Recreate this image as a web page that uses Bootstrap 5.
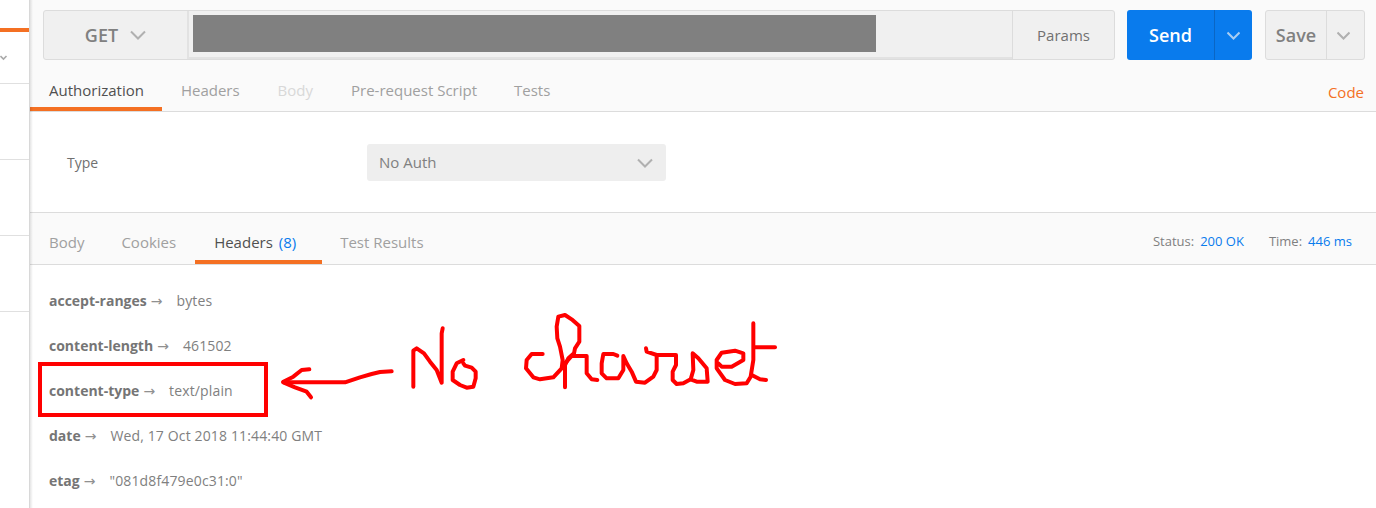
<!DOCTYPE html>
<html lang="en">
<head>
<meta charset="utf-8">
<title>Postman</title>
<link href="https://cdn.jsdelivr.net/npm/bootstrap@5.3.0/dist/css/bootstrap.min.css" rel="stylesheet">
<style>
html,body{height:508px;overflow:hidden}
body{font-family:"Open Sans",sans-serif;font-size:14px;color:#808080;background:#fff;position:relative}
.shell{height:508px}
.sidebar{width:29px;flex:none;background:#fff}
.side-top{height:84px;position:relative;border-bottom:1px solid #e0e0e0}
.side-top::before{content:"";position:absolute;left:0;right:0;top:28px;height:4px;background:#f47023}
.side-chev{position:absolute;left:0;top:55px}
.side-row{height:76px;border-bottom:1px solid #e0e0e0}
.main-pane{flex:1 1 auto;min-width:0;border-left:1px solid #d8d8d8;position:relative}
.main-pane::after{content:"";position:absolute;left:0;top:0;bottom:0;width:3px;background:linear-gradient(to right,rgba(0,0,0,.1),rgba(0,0,0,0))}
.req-head{height:112px;background:#fafafa;border-bottom:1px solid #dcdcdc}
.req-bar{padding:10px 11px 0 13px;height:60px}
.url-group{width:1072px;height:50px;border:1px solid #dcdcdc;border-radius:3px;background:#f0f0f0;overflow:hidden}
.method{width:145px;flex:none;border-right:2px solid #e2e2e2;font-size:18px;font-weight:600;color:#808080;gap:12px}
.url-box{flex:1 1 auto;padding:4px 4px;border-bottom:2px solid #e2e2e2}
.url-mask{width:683px;height:37px;background:#808080}
.params{width:102px;flex:none;border-left:1px solid #dcdcdc;color:#707070;font-size:15px}
.send-group{width:125px;height:50px;margin-left:12px;background:#097bed;border-radius:3px;color:#fff;overflow:hidden}
.send-main{width:87px;font-size:18px;font-weight:600}
.send-caret{flex:1 1 auto;border-left:1px solid #0a66c4}
.save-group{width:100px;height:50px;margin-left:13px;background:#f0f0f0;border:1px solid #dcdcdc;border-radius:3px;overflow:hidden}
.save-main{width:60px;font-size:18px;font-weight:600;color:#808080}
.save-caret{flex:1 1 auto;border-left:1px solid #dcdcdc;padding-right:4px}
.tab-row{height:51px}
.req-tabs{height:51px}
.tab-item{display:flex;align-items:center;color:#a0a0a0;font-size:15px;padding:13px 0 0;margin-right:38px;border-bottom:4px solid transparent;height:51px;white-space:nowrap}
.tab-item.on{color:#505050;border-bottom-color:#f47023}
.tab-item.dim{color:#d8d8d8}
.tab-item.tight{margin-right:37px}
.req-tabs .tab-item.on{padding-left:19px;padding-right:18px;margin-right:19px}
.code-link{color:#f47023;font-size:15px;padding:13px 12px 0 0}
.auth-pane{height:101px;background:#fff;border-bottom:1px solid #dcdcdc;padding:32px 0 0 37px}
.auth-label{width:300px;height:37px;color:#707070}
.auth-select{width:299px;height:37px;background:#eeeeee;border-radius:3px;padding:0 13px 0 12px;color:#808080;font-size:15px}
.res-head{height:52px;background:#fafafa;border-bottom:1px solid #dcdcdc;padding-left:19px}
.res-tabs .tab-item{padding-top:12px}
.res-tabs .tab-item.on{margin-left:-19px;padding-left:19px;padding-right:26px;margin-right:18px}
.count{color:#097bed;margin-left:2px}
.res-meta{font-size:13px;color:#808080;padding:6px 24px 0 0;gap:25px}
.res-meta b{font-weight:400;color:#097bed;margin-left:6px}
.hdr-list{padding:26px 0 0 19px;margin:0;list-style:none}
.hdr-item{height:45px;line-height:20px;white-space:nowrap}
.hdr-item strong{font-weight:700;color:#757575}
.hdr-arrow{font-family:"DejaVu Sans",sans-serif;color:#909090;line-height:1;margin:0 14px 0 4px}
.hdr-val{letter-spacing:.14px}
.mark-box{position:absolute;left:38px;top:362px;width:230px;height:55px;border:4px solid #f00}
.scribble{position:absolute;left:270px;top:300px;width:520px;height:110px;fill:none;stroke:#f00;stroke-width:12;stroke-linecap:round;stroke-linejoin:round}
</style>
</head>
<body>
<div class="d-flex shell">
  <div class="sidebar">
    <div class="side-top">
      <svg class="side-chev" width="8" height="6" viewBox="0 0 8 6"><path d="M.5 1l3 3 3-3" fill="none" stroke="#aaa" stroke-width="1.600"/></svg>
    </div>
    <div class="side-row"></div>
    <div class="side-row"></div>
    <div class="side-row"></div>
  </div>
  <div class="main-pane">
    <div class="req-head">
      <div class="d-flex req-bar">
        <div class="d-flex url-group">
          <div class="d-flex align-items-center justify-content-center method">GET
            <svg width="16" height="10" viewBox="0 0 16 10"><path d="M1 1.500l7 7 7-7" fill="none" stroke="#b0b0b0" stroke-width="2"/></svg>
          </div>
          <div class="url-box"><div class="url-mask"></div></div>
          <div class="d-flex align-items-center justify-content-center params">Params</div>
        </div>
        <div class="d-flex send-group">
          <div class="d-flex align-items-center justify-content-center send-main">Send</div>
          <div class="d-flex align-items-center justify-content-center send-caret">
            <svg width="13" height="9" viewBox="0 0 13 9"><path d="M.5 1.500l6 6 6-6" fill="none" stroke="#a9cdf2" stroke-width="2"/></svg>
          </div>
        </div>
        <div class="d-flex save-group">
          <div class="d-flex align-items-center justify-content-center save-main">Save</div>
          <div class="d-flex align-items-center justify-content-center save-caret">
            <svg width="13" height="9" viewBox="0 0 13 9"><path d="M.5 1.500l6 6 6-6" fill="none" stroke="#b0b0b0" stroke-width="2"/></svg>
          </div>
        </div>
      </div>
      <div class="d-flex justify-content-between tab-row">
        <div class="d-flex req-tabs">
          <div class="tab-item on">Authorization</div>
          <div class="tab-item">Headers</div>
          <div class="tab-item dim">Body</div>
          <div class="tab-item tight">Pre-request Script</div>
          <div class="tab-item">Tests</div>
        </div>
        <div class="code-link d-flex align-items-center">Code</div>
      </div>
    </div>
    <div class="auth-pane d-flex align-items-start">
      <div class="auth-label d-flex align-items-center">Type</div>
      <div class="auth-select d-flex align-items-center justify-content-between">No Auth
        <svg width="16" height="10" viewBox="0 0 16 10"><path d="M1 1.500l7 7 7-7" fill="none" stroke="#b0b0b0" stroke-width="2"/></svg>
      </div>
    </div>
    <div class="res-head d-flex justify-content-between">
      <div class="d-flex res-tabs">
        <div class="tab-item tight">Body</div>
        <div class="tab-item">Cookies</div>
        <div class="tab-item on">Headers&nbsp;<span class="count">(8)</span></div>
        <div class="tab-item">Test Results</div>
      </div>
      <div class="d-flex align-items-center res-meta">
        <span>Status:<b>200 OK</b></span>
        <span>Time:<b>446 ms</b></span>
      </div>
    </div>
    <ul class="hdr-list">
      <li class="hdr-item"><strong>accept-ranges</strong><span class="hdr-arrow">→</span><span class="hdr-val">bytes</span></li>
      <li class="hdr-item"><strong>content-length</strong><span class="hdr-arrow">→</span><span class="hdr-val">461502</span></li>
      <li class="hdr-item"><strong>content-type</strong><span class="hdr-arrow">→</span><span class="hdr-val">text/plain</span></li>
      <li class="hdr-item"><strong>date</strong><span class="hdr-arrow">→</span><span class="hdr-val">Wed, 17 Oct 2018 11:44:40 GMT</span></li>
      <li class="hdr-item"><strong>etag</strong><span class="hdr-arrow">→</span><span class="hdr-val">"081d8f479e0c31:0"</span></li>
    </ul>
  </div>
</div>
<div class="mark-box"></div>
<svg class="scribble" viewBox="0 0 1560 330">
  <path d="M365 214L330 216 305 222 270 232 225 247 40 247"/>
  <path d="M118 208L95 210 70 230 40 245"/>
  <path d="M40 247L75 262 110 275 123 292"/>
  <path d="M430 260L430 152 440 145 462 160 480 185 500 210 515 248 515 100 518 85"/>
  <path d="M580 180L560 190 548 215 548 240 570 255 590 263 610 260 617 235 617 215 605 203 585 197 580 190"/>
  <path d="M818 162L785 162 770 180 768 205 790 232 810 238 850 232 875 205 878 180 870 140 862 115 860 80 865 50 885 45 905 58 928 78 928 125 915 145 912 160 895 175 885 195 885 262"/>
  <path d="M885 190L905 168 950 168 950 220 965 238 982 240"/>
  <path d="M1042 167L1030 162 1000 162 995 190 995 220 1010 235 1045 235 1060 210 1060 168 1070 190 1085 215 1098 245 1125 248 1150 230 1160 210 1160 170"/>
  <path d="M1128 145L1130 155 1160 165 1218 165 1218 195 1208 215 1208 240 1220 252 1240 250 1262 238 1270 210 1268 160 1285 175 1310 205 1313 245 1280 245 1262 238"/>
  <path d="M1345 190L1355 200 1385 200 1420 180 1420 160 1395 152 1355 158 1340 180 1340 205 1365 240 1395 252 1430 250 1442 230 1450 180 1450 70"/>
  <path d="M1452 142L1515 142"/>
  <path d="M1445 225L1470 238 1488 240"/>
</svg>
</body>
</html>
